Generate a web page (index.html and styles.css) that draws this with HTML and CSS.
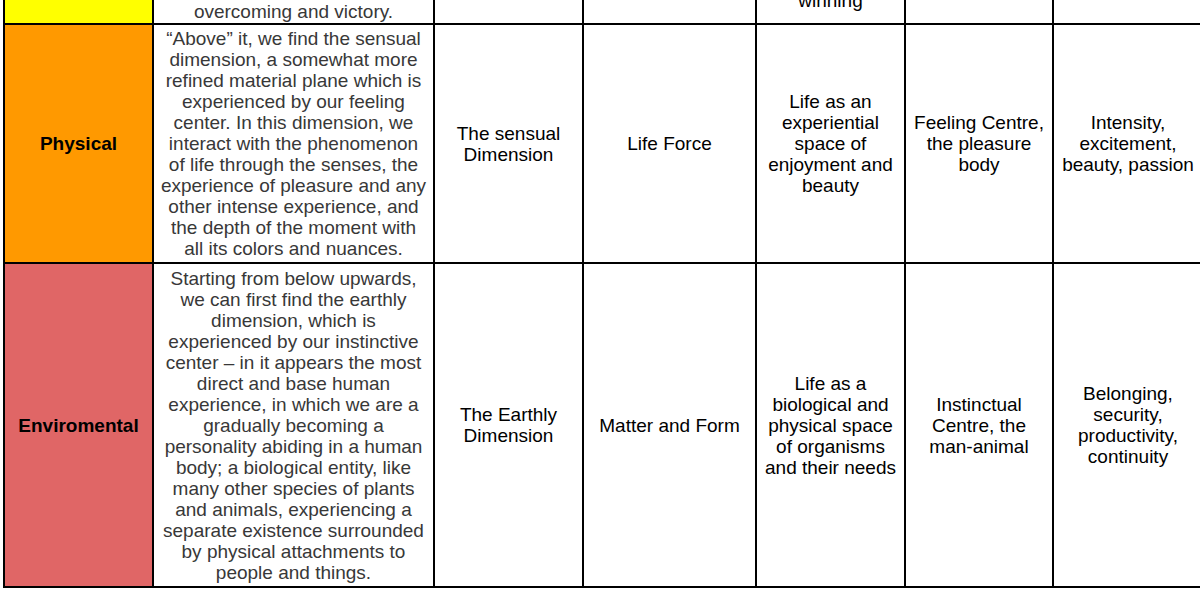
FILE: index.html
```html
<!DOCTYPE html>
<html lang="en">
<head>
<meta charset="utf-8">
<title>Dimensions table</title>
<link rel="stylesheet" href="styles.css">
</head>
<body>
<div class="table">
  <!-- row 1 (cut off at top) -->
  <div class="cell lvl lvl-yellow top"></div>
  <div class="cell desc top pb1">overcoming and victory.</div>
  <div class="cell top"></div>
  <div class="cell top"></div>
  <div class="cell top pb12">winning</div>
  <div class="cell top"></div>
  <div class="cell top"></div>

  <!-- row 2 -->
  <div class="cell lvl lvl-orange">Physical</div>
  <div class="cell desc">“Above” it, we find the sensual<br>dimension, a somewhat more<br>refined material plane which is<br>experienced by our feeling<br>center. In this dimension, we<br>interact with the phenomenon<br>of life through the senses, the<br>experience of pleasure and any<br>other intense experience, and<br>the depth of the moment with<br>all its colors and nuances.</div>
  <div class="cell">The sensual<br>Dimension</div>
  <div class="cell">Life Force</div>
  <div class="cell">Life as an<br>experiential<br>space of<br>enjoyment and<br>beauty</div>
  <div class="cell">Feeling Centre,<br>the pleasure<br>body</div>
  <div class="cell">Intensity,<br>excitement,<br>beauty, passion</div>

  <!-- row 3 -->
  <div class="cell lvl lvl-red">Enviromental</div>
  <div class="cell desc">Starting from below upwards,<br>we can first find the earthly<br>dimension, which is<br>experienced by our instinctive<br>center – in it appears the most<br>direct and base human<br>experience, in which we are a<br>gradually becoming a<br>personality abiding in a human<br>body; a biological entity, like<br>many other species of plants<br>and animals, experiencing a<br>separate existence surrounded<br>by physical attachments to<br>people and things.</div>
  <div class="cell">The Earthly<br>Dimension</div>
  <div class="cell">Matter and Form</div>
  <div class="cell">Life as a<br>biological and<br>physical space<br>of organisms<br>and their needs</div>
  <div class="cell">Instinctual<br>Centre, the<br>man-animal</div>
  <div class="cell">Belonging,<br>security,<br>productivity,<br>continuity</div>
</div>
</body>
</html>
```

FILE: styles.css
```css
html, body {
  margin: 0;
  padding: 0;
  overflow: hidden;
  background: #ffffff;
}

body {
  font-family: "Liberation Sans", Arial, sans-serif;
  font-size: 19px;
  line-height: 21px;
  color: #000000;
}

.table {
  display: grid;
  grid-template-columns: 149px 281px 149px 173px 149px 148px 150px;
  grid-template-rows: 25px 239px 324px;
  width: max-content;
  margin-left: 3px;
  border-left: 2px solid #000000;
}

.cell {
  display: flex;
  flex-direction: column;
  justify-content: center;
  align-items: center;
  text-align: center;
  white-space: nowrap;
  border-right: 2px solid #000000;
  border-bottom: 2px solid #000000;
  padding: 0 2px;
  overflow: hidden;
}

.top {
  justify-content: flex-end;
}

.pb1 {
  padding-bottom: 1px;
}

.pb12 {
  padding-bottom: 12px;
}

.desc {
  color: #383838;
}

.lvl {
  font-weight: bold;
}

.lvl-yellow {
  background: #ffff00;
}

.lvl-orange {
  background: #ff9900;
}

.lvl-red {
  background: #e06666;
}
```
